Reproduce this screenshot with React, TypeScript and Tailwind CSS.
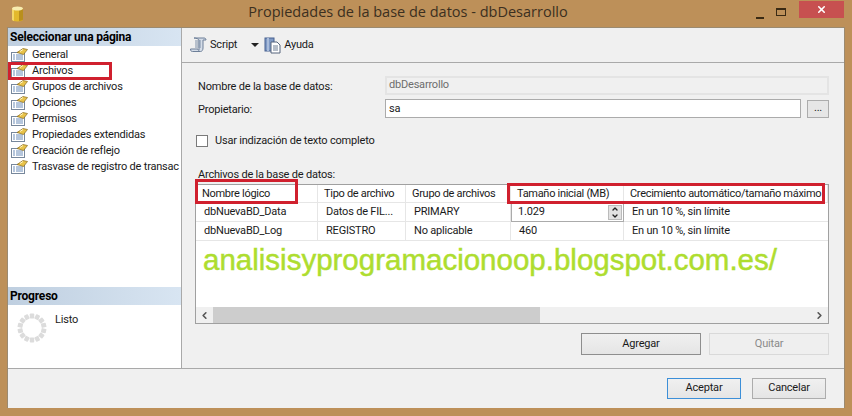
import { ChevronLeft, ChevronRight, ChevronUp, ChevronDown, X } from "lucide-react"

const pages = [
  "General",
  "Archivos",
  "Grupos de archivos",
  "Opciones",
  "Permisos",
  "Propiedades extendidas",
  "Creación de reflejo",
  "Trasvase de registro de transac",
]

const headers = ["Nombre lógico", "Tipo de archivo", "Grupo de archivos", "Tamaño inicial (MB)", "Crecimiento automático/tamaño máximo"]

function PageIcon() {
  return (
    <svg width="17" height="14" viewBox="0 0 17 14" className="shrink-0">
      <rect x="0.5" y="4.500" width="13" height="9" fill="#fff" stroke="#77879b" />
      <path d="M2 7h2M5 7h7M2 9h2M5 9h7M2 11h2M5 11h7" stroke="#6a8cb8" />
      <path d="M6 4.500l6-4 4.500 1-4 5z" fill="#e8c34a" stroke="#8a6a1c" strokeWidth="0.7" />
      <path d="M9 3.500l3-2" stroke="#fff6c8" />
    </svg>
  )
}

function DbIcon() {
  return (
    <svg width="13" height="16" viewBox="0 0 13 16">
      <path d="M1 2.500v11c0 1.200 2.400 2 5.500 2s5.500-.8 5.500-2v-11z" fill="#e3b92c" />
      <path d="M8 3v12c2.200-.2 4-.8 4-1.500V3z" fill="#b98f1c" />
      <path d="M1 3v11l2 1V3z" fill="#f4d868" />
      <ellipse cx="6.500" cy="2.500" rx="5.500" ry="2" fill="#f7ecb0" />
    </svg>
  )
}

function ScriptIcon() {
  return (
    <svg width="17" height="16" viewBox="0 0 17 16">
      <path d="M4 1h10c1.500 0 2 1 2 2h-3v8c0 2-1 3.500-2.500 3.500H2.500C1 14.500.5 13.500.5 12H8c0 1 .4 1.500 1 1.500V3c0-1-3-2-5-2z" fill="#d5dde8" stroke="#6d7f98" />
      <path d="M5 4h6M5 6h6M5 8h6M5 10h6" stroke="#7f90a8" />
    </svg>
  )
}

function HelpIcon() {
  return (
    <svg width="17" height="17" viewBox="0 0 17 17">
      <rect x="1" y="1" width="9" height="13" fill="#7f99c4" stroke="#47618f" />
      <rect x="3" y="1" width="2" height="13" fill="#a9bcdb" />
      <path d="M7 5h6l3 3v8H7z" fill="#fff" stroke="#56657c" />
      <path d="M9 9h5M9 11h5M9 13h5" stroke="#6d7c92" />
    </svg>
  )
}

function Spinner() {
  const marks = Array.from({ length: 14 }, (_, i) => (i * 360) / 14)
  return (
    <svg width="30" height="30" viewBox="0 0 30 30">
      {marks.map((a) => (
        <rect key={a} x="12.800" y="0.500" width="4.400" height="5" rx="0.800" fill="#dcdcdc" transform={`rotate(${a} 15 15)`} />
      ))}
    </svg>
  )
}

function PanelTitle({ text }: { text: string }) {
  return (
    <div className="h-[18px] px-[2px] flex items-center bg-gradient-to-r from-[#bfcfe0] to-[#d8e5f2] text-[12px] font-bold text-black leading-none">
      {text}
    </div>
  )
}

export default function App() {
  return (
    <div className="w-[852px] h-[416px] bg-[#bd9059] flex flex-col overflow-hidden relative font-['Roboto',sans-serif] text-[11px] tracking-[-0.2px] text-[#1a1a1a]">
      <div className="h-[27px] shrink-0 flex items-center relative">
        <div className="w-[11px]" />
        <DbIcon />
        <div className="flex-1 text-center text-[#3b2f20] text-[14.5px] tracking-normal pl-[36px] pb-[3px] font-['Open_Sans',sans-serif]">Propiedades de la base de datos - dbDesarrollo</div>
        <div className="w-[20px] h-[10px] flex items-end"><div className="w-[8px] h-[2px] bg-[#3a2a14]" /></div>
        <div className="w-[10px] h-[8px] border border-[#3a2a14] border-t-2 mr-[13px] mb-[4px]" />
        <div className="w-[45px] h-[17px] mb-[9px] mr-[8px] bg-[#c75050] flex items-center justify-center">
          <X size={11} strokeWidth={3.5} color="#fff" />
        </div>
      </div>

      <div className="mx-[7px] mb-[8px] flex-1 flex flex-col bg-[#f0f0f0] border border-[#9b8a70] border-b-0 min-h-0">
        <div className="flex-1 flex min-h-0 border-b border-[#a9a9a9]">
          <div className="w-[174px] shrink-0 bg-white border-r border-[#a9a9a9] flex flex-col">
            <PanelTitle text="Seleccionar una página" />
            <div className="flex-1 pl-[3px] pt-[1px]">
              {pages.map((p) => (
                <div key={p} className="h-[16px] flex items-center gap-[4px] whitespace-nowrap overflow-hidden">
                  <PageIcon />
                  <span>{p}</span>
                </div>
              ))}
            </div>
            <PanelTitle text="Progreso" />
            <div className="h-[63px] flex pl-[9px] pt-[8px] gap-[8px]">
              <Spinner />
              <span className="leading-none pt-[1px]">Listo</span>
            </div>
          </div>

          <div className="flex-1 flex flex-col min-w-0">
            <div className="h-[35px] shrink-0 border-b border-[#a9a9a9] flex items-center pl-[8px]">
              <ScriptIcon />
              <span className="ml-[3px]">Script</span>
              <div className="ml-[14px] border-x-[4px] border-x-transparent border-t-[4px] border-t-[#222]" />
              <div className="ml-[5px]"><HelpIcon /></div>
              <span className="ml-[3px]">Ayuda</span>
            </div>

            <div className="flex-1 flex flex-col pl-[13px] pr-[15px] pt-[12px] min-h-0">
              <div className="flex items-center h-[20px] pl-[3px]">
                <span className="w-[187px] shrink-0 pt-[4px]">Nombre de la base de datos:</span>
                <div className="flex-1 h-[19px] border-2 border-[#e4e4e4] px-[2px] pt-[1px] flex items-center text-[#6d6d6d]">dbDesarrollo</div>
              </div>
              <div className="flex items-center h-[19px] mt-[4px] pl-[3px]">
                <span className="w-[187px] shrink-0 pt-[4px]">Propietario:</span>
                <div className="flex-1 h-[19px] border border-[#ababab] bg-white px-[3px] pt-[2px] flex items-center">sa</div>
                <div className="w-[22px] h-[18px] ml-[6px] border border-[#acacac] bg-[#e6e6e6] flex items-center justify-center">...</div>
              </div>
              <div className="flex items-center mt-[16px] h-[14px] pl-[1px] gap-[7px]">
                <div className="w-[12px] h-[12px] border border-[#7a7a7a] bg-white" />
                <span className="pt-[1px]">Usar indización de texto completo</span>
              </div>
              <div className="mt-[20px] h-[14px] pl-[3px] leading-[14px]">Archivos de la base de datos:</div>

              <div className="h-[140px] mt-[2px] border border-[#a0a0a0] bg-white flex flex-col">
                <div className="grid grid-cols-[122px_88px_105px_113px_1fr] h-[18px] shrink-0 border-b border-[#e6e6e6] tracking-[-0.3px]">
                  {headers.map((h) => (
                    <div key={h} className="pl-[6px] pt-[1px] flex items-center border-r border-[#e6e6e6] whitespace-nowrap overflow-hidden">{h}</div>
                  ))}
                </div>
                <div className="grid grid-cols-[122px_88px_105px_113px_1fr] h-[19px] shrink-0 border-b border-[#e6e6e6]">
                  <div className="pl-[8px] flex items-center border-r border-[#e6e6e6]">dbNuevaBD_Data</div>
                  <div className="pl-[8px] flex items-center border-r border-[#e6e6e6]">Datos de FIL...</div>
                  <div className="pl-[8px] flex items-center border-r border-[#e6e6e6]">PRIMARY</div>
                  <div className="pl-[6px] flex items-center justify-between border border-[#ababab] pr-[1px]">
                    <span>1.029</span>
                    <div className="w-[14px] h-[15px] flex flex-col bg-[#e2e2e2] border border-[#bbb]">
                      <div className="flex-1 flex items-center justify-center overflow-hidden"><ChevronUp size={8} strokeWidth={4} color="#222" /></div>
                      <div className="flex-1 flex items-center justify-center overflow-hidden"><ChevronDown size={8} strokeWidth={4} color="#222" /></div>
                    </div>
                  </div>
                  <div className="pl-[8px] flex items-center">En un 10 %, sin límite</div>
                </div>
                <div className="grid grid-cols-[122px_88px_105px_113px_1fr] h-[19px] shrink-0 border-b border-[#e6e6e6]">
                  <div className="pl-[8px] pt-[1px] flex items-center border-r border-[#e6e6e6]">dbNuevaBD_Log</div>
                  <div className="pl-[8px] pt-[1px] flex items-center border-r border-[#e6e6e6]">REGISTRO</div>
                  <div className="pl-[8px] pt-[1px] flex items-center border-r border-[#e6e6e6]">No aplicable</div>
                  <div className="pl-[8px] pt-[1px] flex items-center border-r border-[#e6e6e6]">460</div>
                  <div className="pl-[8px] pt-[1px] flex items-center">En un 10 %, sin límite</div>
                </div>
                <div className="flex-1 pl-[7px] pt-[1px] font-['Liberation_Sans',sans-serif] text-[29.5px] tracking-normal leading-[36px] text-[#aedd2f] [-webkit-text-stroke:0.5px_#aedd2f] whitespace-nowrap overflow-hidden">
                  analisisyprogramacionoop.blogspot.com.es/
                </div>
                <div className="h-[16px] shrink-0 bg-[#f0f0f0] flex items-center justify-between relative">
                  <div className="w-[17px] flex justify-center"><ChevronLeft size={11} strokeWidth={3.5} color="#555" /></div>
                  <div className="absolute left-[17px] top-0 h-[16px] w-[327px] bg-[#cdcdcd]" />
                  <div className="w-[17px] flex justify-center"><ChevronRight size={11} strokeWidth={3.5} color="#555" /></div>
                </div>
              </div>

              <div className="flex justify-end gap-[8px] mt-[9px]">
                <div className="w-[120px] h-[22px] border border-[#8e8e8e] bg-gradient-to-b from-[#f0f0f0] to-[#e5e5e5] flex items-center justify-center">Agregar</div>
                <div className="w-[120px] h-[22px] border border-[#d9d9d9] bg-[#efefef] flex items-center justify-center text-[#8a8a8a]">Quitar</div>
              </div>
            </div>
          </div>
        </div>

        <div className="h-[39px] shrink-0 flex items-start justify-end gap-[11px] pt-[9px] pr-[18px]">
          <div className="w-[74px] h-[21px] border border-[#3c8fd8] bg-gradient-to-b from-[#f0f0f0] to-[#e5e5e5] flex items-center justify-center">Aceptar</div>
          <div className="w-[74px] h-[21px] border border-[#acacac] bg-gradient-to-b from-[#f0f0f0] to-[#e5e5e5] flex items-center justify-center">Cancelar</div>
        </div>
      </div>

      {/* red marks drawn over the capture */}
      <div className="absolute left-[8px] top-[62px] w-[104px] h-[18px] border-[3px] border-[#d0202e]" />
      <div className="absolute left-[195px] top-[179px] w-[103px] h-[25px] border-[3px] border-[#d0202e]" />
      <div className="absolute left-[507px] top-[183px] w-[318px] h-[21px] border-[3px] border-[#d0202e]" />
    </div>
  )
}
